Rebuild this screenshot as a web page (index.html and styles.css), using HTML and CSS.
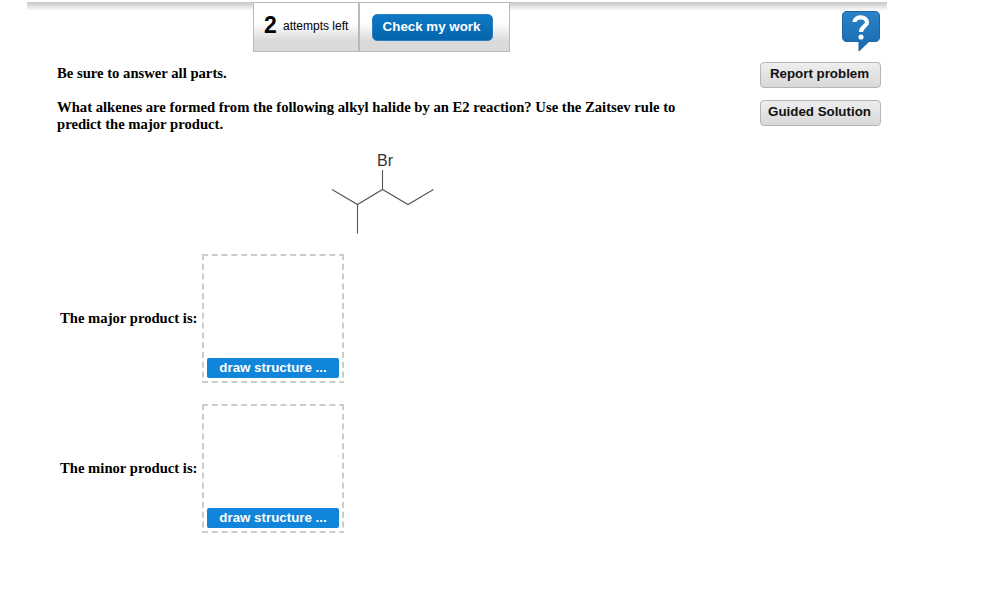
FILE: index.html
```html
<!DOCTYPE html>
<html lang="en">
<head>
    <meta charset="UTF-8">
    <title>Question</title>
    <link rel="stylesheet" href="styles.css">
</head>
<body>
    <div id="page">
        <!-- top bar -->
        <div class="topbar">
            <div class="tools">
                <div class="attempts"><b>2</b><span>attempts left</span></div>
                <div class="check"><button class="check-btn">Check my work</button></div>
            </div>
        </div>
        <div class="main">
            <div class="question">
                <p>Be sure to answer all parts.</p>
                <p class="ask">What alkenes are formed from the following alkyl halide by an E2 reaction? Use the Zaitsev rule to<br>predict the major product.</p>
                <svg class="molecule" width="110" height="86" viewBox="0 0 110 86">
                    <text x="49" y="16">Br</text>
                    <path d="M4 39.5L29.5 54.5L54.5 39.5L80 54.5L105.5 39.5M54.5 39.5V20M29.5 54.5V83.5"/>
                </svg>
                <div class="answer">
                    <span>The major product is:</span>
                    <div class="drawbox">
                        <svg class="dashes" width="142" height="129"><path d="M0 1H142M0 128H142M1 0V129M141 0V129"/></svg>
                        <button class="draw-btn">draw structure ...</button>
                    </div>
                </div>
                <div class="answer">
                    <span>The minor product is:</span>
                    <div class="drawbox">
                        <svg class="dashes" width="142" height="129"><path d="M0 1H142M0 128H142M1 0V129M141 0V129"/></svg>
                        <button class="draw-btn">draw structure ...</button>
                    </div>
                </div>
            </div>
            <div class="side">
                <svg class="help" width="38" height="41" viewBox="0 0 38 41">
                    <defs>
                        <linearGradient id="blue" x1="0" y1="0" x2="0" y2="1">
                            <stop offset="0" stop-color="#2c83c8"/>
                            <stop offset="1" stop-color="#1869ae"/>
                        </linearGradient>
                    </defs>
                    <path d="M5 .5H33Q37.5 .5 37.5 5V26Q37.5 30.5 33 30.5H27L17 40V30.5H5Q.5 30.5 .5 26V5Q.5 .5 5 .5Z" fill="url(#blue)" stroke="#1b66a5"/>
                    <path d="M12.5 11C12.8 4.8 25 4.8 25 11.2C25 15.5 19 15.5 19 21" fill="none" stroke="#fff" stroke-width="4.2"/>
                    <circle cx="19" cy="26" r="2.6" fill="#fff"/>
                </svg>
                <button class="side-btn">Report problem</button>
                <button class="side-btn">Guided Solution</button>
            </div>
        </div>
    </div>
</body>
</html>
```
FILE: styles.css
```css
*{
    margin:0;
    padding:0;
    box-sizing: border-box;
}
body{
    background-color:#fff;
    color:#000;
    font-family:"Liberation Sans", Arial, sans-serif;
}
button{
    font:bold 13.333px "Liberation Sans", Arial, sans-serif;
    white-space: nowrap;
}
#page{
    width:860px;
    margin-left:27px;
    padding-top:2px;
}
/* top bar */
.topbar{
    height:9px;
    background:linear-gradient(#c6c6c6, #fff);
}
.tools{
    display:flex;
    width:257px;
    height:50px;
    margin-left:226px;
    border:1px solid #b9b9b9;
    background:linear-gradient(#fff 42%, #dadada 78%);
}
.attempts{
    display:flex;
    width:106px;
    padding-left:10px;
    border-right:2px solid #b9b9b9;
}
.attempts b{
    width:19px;
    font-size:23px;
    line-height:45px;
}
.attempts span{
    font-size:12px;
    line-height:46px;
    white-space: nowrap;
}
.check{
    padding:11px 0 0 12px;
}
.check-btn{
    width:121px;
    height:27px;
    padding:0 2px 2px 0;
    border:1px solid #2c7fbe;
    border-radius:5px;
    background:linear-gradient(#0d78c4, #0565ab);
    color:#fff;
}
.main{
    display:flex;
    justify-content: space-between;
    padding-right:6px;
}
/* question */
.question{
    width:640px;
    padding:54px 0 0 30px;
    font:bold 11pt/17px "Liberation Serif", "Times New Roman", serif;
}
.question p{
    white-space: nowrap;
}
.question .ask{
    margin-top:17px;
}
.molecule{
    display:block;
    margin:17px 0 0 271px;
}
.molecule text{
    font:16px "Liberation Sans", Arial, sans-serif;
    fill:#333;
}
.molecule path{
    fill:none;
    stroke:#555;
    stroke-width:1.1;
}
.answer{
    display:flex;
    align-items: center;
    height:129px;
    margin:18px 0 21px 3px;
}
.answer span{
    width:142px;
    white-space: nowrap;
}
.drawbox{
    position: relative;
    display:flex;
    align-items: flex-end;
    width:142px;
    height:129px;
    padding:5px;
}
.dashes{
    position: absolute;
    left:0;
    top:0;
}
.dashes path{
    fill:none;
    stroke:#ccc;
    stroke-width:2;
    stroke-dasharray:6 3.8;
}
/* above the dashed frame */
.draw-btn{
    width:132px;
    height:20px;
    padding-bottom:2px;
    border:0;
    border-radius:2px;
    background-color:#1185d9;
    color:#fff;
}
/* right side buttons */
.side{
    display:flex;
    flex-direction: column;
    align-items: flex-end;
    flex-shrink: 0;
}
.help{
    margin:0 1px 10px 0;
}
.side-btn{
    width:121px;
    height:26px;
    margin-bottom:12px;
    padding:0 2px 3px 0;
    border:1px solid #b5b5b5;
    border-radius:4px;
    background:linear-gradient(#eee, #d8d8d8);
    color:#111;
}
```
